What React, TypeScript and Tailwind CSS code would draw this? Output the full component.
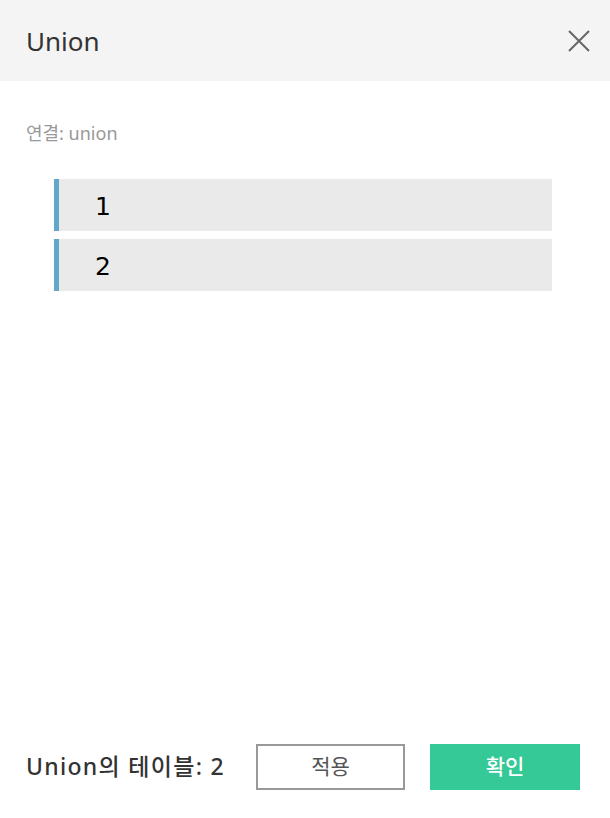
import React from "react";

const rows = ["1", "2"];

export default function App() {
  return (
    <div
      className="flex h-[818px] w-[610px] flex-col bg-white"
      style={{ fontFamily: '"Noto Sans", "Noto Sans CJK KR", sans-serif' }}
    >
      {/* Header */}
      <div className="flex h-[81px] shrink-0 items-center justify-between bg-[#f4f4f4] pl-[26px] pr-[18px]">
        <h1 className="text-[26px] font-normal leading-none text-[#333]">Union</h1>
        <button className="flex h-[26px] w-[26px] items-center justify-center text-[#666]">
          <svg width="24" height="24" viewBox="0 0 24 24" fill="none" stroke="currentColor" strokeWidth="2">
            <path d="M2 2L22 22M22 2L2 22" />
          </svg>
        </button>
      </div>

      {/* Body */}
      <div className="flex-1 px-[26px] pt-[40px]">
        <p className="text-[18px] leading-[24px] text-[#999]">연결: union</p>
        <ul className="mt-[34px] flex flex-col gap-[8px] pl-[28px] pr-[32px]">
          {rows.map((r) => (
            <li
              key={r}
              className="flex h-[52px] items-center border-l-[5px] border-[#62a8cb] bg-[#eaeaea] pl-[36px] pt-[4px] text-[25px] text-black"
              style={{ fontFamily: '"DejaVu Sans", sans-serif' }}
            >
              {r}
            </li>
          ))}
        </ul>
      </div>

      {/* Footer */}
      <div className="flex h-[74px] shrink-0 items-start pl-[26px] pr-[30px]">
        <span className="mt-[7px] text-[23px] font-medium leading-[30px] tracking-[1.3px] text-[#333]">
          Union의 테이블: 2
        </span>
        <div className="ml-auto flex gap-[25px]">
          <button className="h-[46px] w-[149px] border-2 border-[#999] text-[21px] text-[#555]">
            적용
          </button>
          <button className="h-[46px] w-[150px] bg-[#34c997] text-[21px] font-medium text-white">
            확인
          </button>
        </div>
      </div>
    </div>
  );
}
